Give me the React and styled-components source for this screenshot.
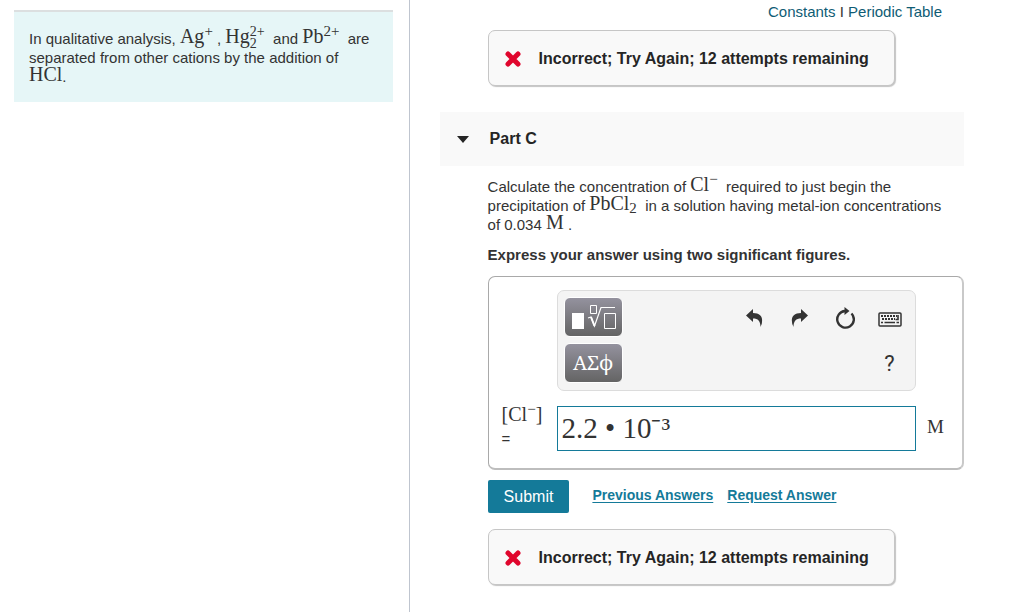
import React, { useState } from "react";
import styled, { createGlobalStyle } from "styled-components";

const GlobalStyle = createGlobalStyle`
  * {
    box-sizing: border-box;
  }

  body {
    margin: 0;
    background: #ffffff;
    color: #333333;
    font-family: "Liberation Sans", Arial, sans-serif;
    font-size: 15px;
    line-height: 19px;
  }
`;

const Page = styled.div`
  display: grid;
  grid-template-columns: 2fr 3fr;
  min-height: 100vh;
`;

const Sidebar = styled.aside`
  border-right: 1px solid #bfc5cf;
  padding: 10px 16px 10px 14px;
`;

const Intro = styled.div`
  background: #e6f6f7;
  border-top: 2px solid #dcdfe0;
  padding: 17px 15px 16px;
`;

const Content = styled.main`
  padding: 2px 60px 24px 30px;
`;

const Resources = styled.nav`
  text-align: right;
  padding-right: 22px;
`;

const ResourceLink = styled.a`
  color: #0f5c74;
  text-decoration: none;
`;

const Indented = styled.div`
  padding-left: 48px;
`;

const FeedbackBox = styled.div`
  display: flex;
  align-items: center;
  gap: 18px;
  width: fit-content;
  min-width: 407px;
  height: 56px;
  margin-top: ${({ $gap }) => $gap}px;
  padding: 1px 16px 0;
  background: #f9f9f9;
  border: 1px solid #c6c6c6;
  border-radius: 7px;
  box-shadow: 1px 1px 1px #c4c4c4;
  color: #252525;
  font-size: 16px;
  font-weight: bold;
`;

const PartHeader = styled.button`
  display: flex;
  align-items: center;
  gap: 21px;
  width: 100%;
  height: 54px;
  margin-top: 26px;
  padding: 0 17px;
  border: none;
  background: #f9f9f9;
  color: #252525;
  font: bold 16px "Liberation Sans", Arial, sans-serif;
  text-align: left;
  cursor: pointer;
`;

const Question = styled.p`
  margin: 11px 0;
  padding-right: 12px;
`;

const Instruction = styled.p`
  margin: 0 0 12px;
  font-weight: bold;
`;

const Formula = styled.span`
  font-family: "Liberation Serif", "Times New Roman", serif;
  font-size: 20px;
  line-height: 1px;
  vertical-align: 1px;
  white-space: nowrap;
`;

const Sup = styled.sup`
  font-size: 15px;
  line-height: 1px;
  vertical-align: 7px;
`;

const Sub = styled.sub`
  font-size: 15px;
  line-height: 1px;
  vertical-align: -3px;
`;

const Scripts = styled.span`
  display: inline-flex;
  flex-direction: column;
  margin: -6px 0;
  vertical-align: middle;
  font-size: 14px;
  line-height: 12px;
`;

const AnswerBox = styled.form`
  display: grid;
  grid-template-columns: 55px 1fr 32px;
  row-gap: 15px;
  padding: 13px 14px 17px 13px;
  border: 1px solid #a9a9a9;
  border-right: 2px solid #c9c9c9;
  border-bottom: 2px solid #bdbdbd;
  border-radius: 7px;
`;

const Toolbar = styled.div`
  grid-column: 2;
  display: flex;
  justify-content: space-between;
  height: 101px;
  padding: 6px;
  background: #f4f4f4;
  border: 1px solid #dcdcdc;
  border-radius: 7px;
`;

const Palettes = styled.div`
  display: flex;
  flex-direction: column;
  gap: 6px;
`;

const PaletteButton = styled.button`
  display: flex;
  align-items: center;
  justify-content: center;
  width: 59px;
  height: 40px;
  padding: 0 0 2px;
  border: 1px solid #ffffff;
  border-radius: 6px;
  background: linear-gradient(#94929e, #646464);
  color: #ffffff;
  font-family: "Noto Serif", "DejaVu Serif", serif;
  font-size: 20px;
  cursor: pointer;
`;

const Tools = styled.div`
  display: grid;
  grid-template-columns: repeat(4, 45px);
  grid-template-rows: 41px 50px;
  place-items: center;
  margin-right: -3px;
`;

const ToolButton = styled.button`
  display: flex;
  padding: 0;
  border: none;
  background: none;
  color: #333333;
  font: 22px Roboto, sans-serif;
  cursor: pointer;

  &:last-child {
    grid-column: 4;
  }
`;

const AnswerLabel = styled.label`
  grid-column: 1;
  line-height: 22px;
`;

const AnswerInput = styled.input`
  width: 100%;
  min-width: 0;
  height: 45px;
  padding: 0 4px 4px;
  border: 1px solid #147a99;
  border-radius: 0;
  outline: none;
  background: #ffffff;
  color: #333333;
  font-family: "Liberation Serif", "Times New Roman", serif;
  font-size: 29px;
`;

const Unit = styled.span`
  align-self: center;
  padding-left: 11px;
  padding-bottom: 4px;
  font-family: "Liberation Serif", "Times New Roman", serif;
  font-size: 19px;
`;

const Actions = styled.div`
  display: flex;
  align-items: center;
  margin-top: 10px;
`;

const SubmitButton = styled.button`
  height: 33px;
  margin-right: 23px;
  padding: 0 16px;
  border: none;
  border-radius: 2px;
  background: #147a99;
  color: #ffffff;
  font: 16px "Liberation Sans", Arial, sans-serif;
  cursor: pointer;
`;

const ActionLink = styled.a`
  margin-right: 14px;
  padding-bottom: 2px;
  color: #147a99;
  font-size: 14px;
  font-weight: bold;
  text-underline-offset: 2px;
`;

const CrossIcon = () => (
  <svg width="16" height="16" viewBox="0 0 16 16" aria-hidden="true">
    <path
      d="M3 3L13 13M13 3L3 13"
      stroke="#e0062d"
      strokeWidth="5"
      strokeLinecap="round"
    />
  </svg>
);

const CaretIcon = () => (
  <svg width="12" height="7" viewBox="0 0 12 7" aria-hidden="true">
    <path d="M0 0H12L6 7Z" fill="#252525" />
  </svg>
);

const TemplatesIcon = () => (
  <svg width="46" height="28" viewBox="0 0 46 28" fill="none" aria-hidden="true">
    <path d="M2 11H14V27H2Z" fill="#ffffff" />
    <path
      d="M20.5 3.500H26.500V11.500H20.500ZM34.500 11.500H45.500V26.500H34.500Z"
      stroke="#ffffff"
    />
    <path
      d="M18 16L21 15L24.500 24L31 5.500H45"
      stroke="#ffffff"
      strokeWidth="1.200"
    />
    <path d="M21 15L24.500 24" stroke="#ffffff" strokeWidth="2" />
  </svg>
);

const ArrowIcon = ({ flipped }) => (
  <svg width="17" height="18" viewBox="0 0 17 18" aria-hidden="true">
    <path
      d="M0 6.500L7 0V4C13 4 17 7 16 13C16 15 15 16.500 14.500 18C14.500 12 12 9.500 7 9.500V13Z"
      fill="#333333"
      transform={flipped ? "translate(17 0) scale(-1 1)" : undefined}
    />
  </svg>
);

const ResetIcon = () => (
  <svg width="20" height="22" viewBox="0 0 20 22" aria-hidden="true">
    <path
      d="M16.500 6.500A8.300 8.300 0 1 1 10 4"
      fill="none"
      stroke="#333333"
      strokeWidth="2.400"
    />
    <path d="M9.500 0L14.500 4L9.500 8Z" fill="#333333" />
  </svg>
);

const KeyboardIcon = () => (
  <svg width="24" height="19" viewBox="0 0 24 19" fill="none" aria-hidden="true">
    <rect
      x="1"
      y="5"
      width="22"
      height="13"
      rx="1"
      stroke="#333333"
      strokeWidth="1.500"
    />
    <path
      d="M3 8H19M4 11H17"
      stroke="#333333"
      strokeWidth="1.800"
      strokeDasharray="2 1"
    />
    <path
      d="M3 14.500H5M6.500 14.500H17M18.500 14.500H21M20 7V11.500H17.500"
      stroke="#333333"
      strokeWidth="1.600"
    />
  </svg>
);

function Feedback({ gap }) {
  return (
    <FeedbackBox $gap={gap}>
      <CrossIcon />
      Incorrect; Try Again; 12 attempts remaining
    </FeedbackBox>
  );
}

export default function App() {
  const [answer, setAnswer] = useState("2.2 • 10⁻³");

  return (
    <>
      <GlobalStyle />
      <Page>
        <Sidebar>
          <Intro>
            In qualitative analysis,{" "}
            <Formula>
              Ag<Sup>+</Sup>
            </Formula>{" "}
            ,{" "}
            <Formula>
              Hg
              <Scripts>
                <span>2+</span>
                <span>2</span>
              </Scripts>
            </Formula>
            {"\u00a0 "}and{" "}
            <Formula>
              Pb<Sup>2+</Sup>
            </Formula>
            {"\u00a0 "}are separated from other cations by the addition of{" "}
            <Formula>HCl</Formula>.
          </Intro>
        </Sidebar>
        <Content>
          <Resources>
            <ResourceLink href="#constants">Constants</ResourceLink> I{" "}
            <ResourceLink href="#periodic-table">Periodic Table</ResourceLink>
          </Resources>
          <Indented>
            <Feedback gap={9} />
          </Indented>
          <PartHeader type="button" aria-expanded="true">
            <CaretIcon />
            Part C
          </PartHeader>
          <Indented>
            <Question>
              Calculate the concentration of{" "}
              <Formula>
                Cl<Sup>−</Sup>
              </Formula>
              {"\u00a0 "}required to just begin the precipitation of{" "}
              <Formula>
                PbCl<Sub>2</Sub>
              </Formula>
              {"\u00a0 "}in a solution having metal-ion concentrations of 0.034{" "}
              <Formula>M</Formula> .
            </Question>
            <Instruction>
              Express your answer using two significant figures.
            </Instruction>
            <AnswerBox id="answer-form" onSubmit={(e) => e.preventDefault()}>
              <Toolbar>
                <Palettes>
                  <PaletteButton type="button" aria-label="Templates">
                    <TemplatesIcon />
                  </PaletteButton>
                  <PaletteButton type="button">ΑΣϕ</PaletteButton>
                </Palettes>
                <Tools>
                  <ToolButton type="button" aria-label="Undo">
                    <ArrowIcon />
                  </ToolButton>
                  <ToolButton type="button" aria-label="Redo">
                    <ArrowIcon flipped />
                  </ToolButton>
                  <ToolButton
                    type="button"
                    aria-label="Reset"
                    onClick={() => setAnswer("")}
                  >
                    <ResetIcon />
                  </ToolButton>
                  <ToolButton type="button" aria-label="Keyboard shortcuts">
                    <KeyboardIcon />
                  </ToolButton>
                  <ToolButton type="button">?</ToolButton>
                </Tools>
              </Toolbar>
              <AnswerLabel htmlFor="answer">
                <Formula>
                  [Cl<Sup>−</Sup>]
                </Formula>
                <br />=
              </AnswerLabel>
              <AnswerInput
                id="answer"
                value={answer}
                onChange={(e) => setAnswer(e.target.value)}
              />
              <Unit>M</Unit>
            </AnswerBox>
            <Actions>
              <SubmitButton type="submit" form="answer-form">
                Submit
              </SubmitButton>
              <ActionLink href="#previous">Previous Answers</ActionLink>
              <ActionLink href="#request">Request Answer</ActionLink>
            </Actions>
            <Feedback gap={16} />
          </Indented>
        </Content>
      </Page>
    </>
  );
}
